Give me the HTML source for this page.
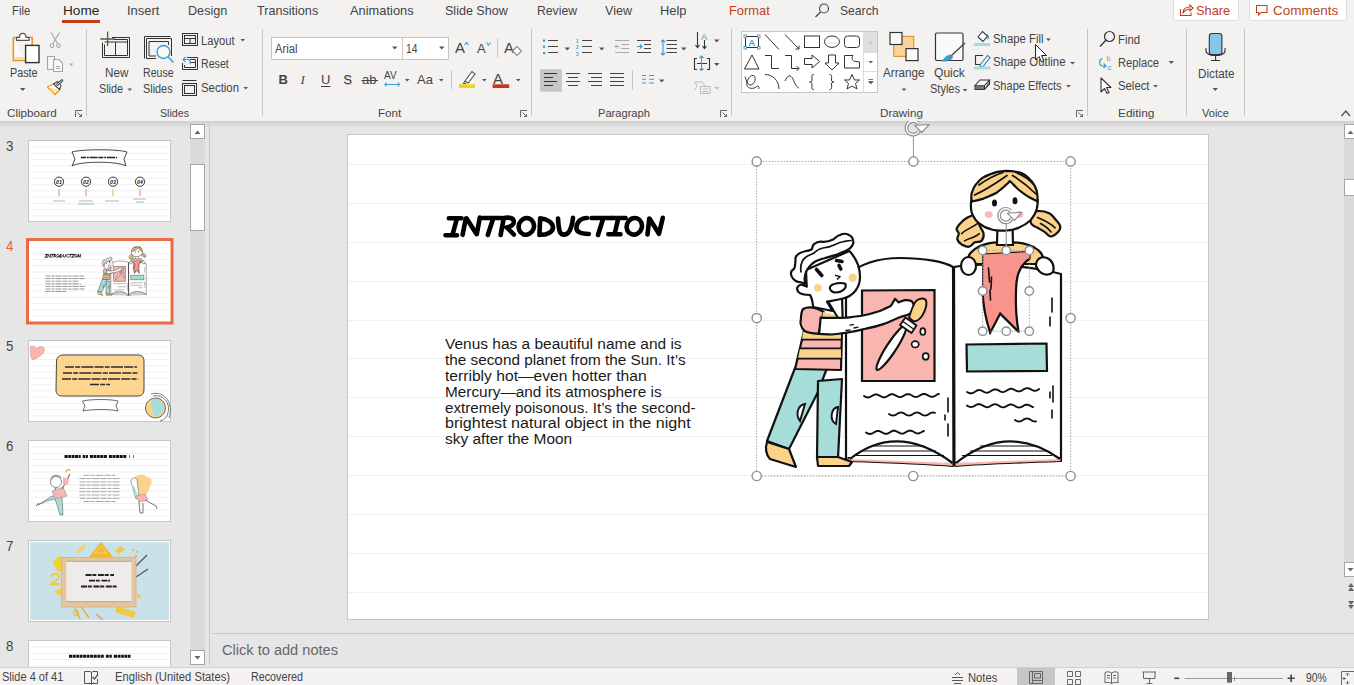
<!DOCTYPE html>
<html><head><meta charset="utf-8"><style>
html,body{margin:0;padding:0;width:1354px;height:685px;overflow:hidden;background:#e6e6e6;font-family:'Liberation Sans',sans-serif;}
.t{position:absolute;white-space:pre;transform-origin:0 0;font-family:'Liberation Sans',sans-serif;}
.b{position:absolute;box-sizing:border-box;}
.ov{position:absolute;left:0;top:0;}

</style></head><body>
<div class=b style="left:0;top:0;width:1354px;height:121px;background:#f3f2f1"></div>
<div class=b style="left:0;top:121px;width:1354px;height:7px;background:linear-gradient(#cfcfcf,#e6e6e6)"></div>
<div class=b style="left:62px;top:20px;width:38px;height:3px;background:#c43e1c"></div>
<div class=b style="left:1173px;top:-2px;width:66px;height:23px;background:#fff;border:1px solid #e1dfdd;border-radius:3px"></div>
<div class=b style="left:1249px;top:-2px;width:98px;height:23px;background:#fff;border:1px solid #e1dfdd;border-radius:3px"></div>
<!-- left panel -->
<div class=b style="left:190px;top:124px;width:15px;height:541px;background:#dadada"></div>
<div class=b style="left:190px;top:124px;width:15px;height:15px;background:#fff;border:1px solid #a6a6a6"></div>
<div class=b style="left:190px;top:164px;width:15px;height:67px;background:#fff;border:1px solid #a6a6a6"></div>
<div class=b style="left:190px;top:650px;width:15px;height:15px;background:#fff;border:1px solid #a6a6a6"></div>
<div class=b style="left:209px;top:124px;width:1px;height:541px;background:#c8c8c8"></div>
<!-- right scrollbar -->
<div class=b style="left:1344px;top:124px;width:10px;height:439px;background:#dadada"></div>
<div class=b style="left:1344px;top:124px;width:12px;height:15px;background:#fff;border:1px solid #a6a6a6"></div>
<div class=b style="left:1344px;top:179px;width:12px;height:17px;background:#fff;border:1px solid #a6a6a6"></div>
<div class=b style="left:1344px;top:562px;width:12px;height:15px;background:#fff;border:1px solid #a6a6a6"></div>
<!-- slide -->
<div class=b style="left:347px;top:134px;width:862px;height:486px;background:#fff;border:1px solid #c6c6c6"></div>
<!-- notes -->
<div class=b style="left:212px;top:633px;width:1142px;height:1px;background:#c8c8c8"></div>
<!-- status bar -->
<div class=b style="left:0;top:667px;width:1354px;height:18px;background:#f3f2f1;border-top:1px solid #d2d2d2"></div>
<div class=b style="left:1017px;top:668px;width:38px;height:17px;background:#c8c6c4"></div>

<svg class=ov width="1354" height="685" viewBox="0 0 1354 685">
<g stroke="#f0f0f0" stroke-width="1">
<path d="M348 164.5H1208M348 203.5H1208M348 242.5H1208M348 281.5H1208M348 320.5H1208M348 358.5H1208M348 397.5H1208M348 436.5H1208M348 475.5H1208M348 514.5H1208M348 553.5H1208M348 592.5H1208"/>
</g>
<g id="ttl" fill="none" stroke="#000" stroke-width="4.6" stroke-linecap="round" stroke-linejoin="round">
<path d="M448.8,218.3H461.5 M456.8,218.8L452.6,234.5 M445.5,235.2H457"/>
<path d="M465.8,218.5L462.6,234.8 M466.6,218.5L476.5,234 M479.8,217.6L476.8,234"/>
<path d="M481.8,218H501.5 M493.2,218.5L487.8,235"/>
<path d="M503.8,218L500.6,235 M503.8,218C509,217 513.5,218 513.8,221.5C514,225 510,227 506.5,227.5 M507,227.5L513.8,234.5"/>
<ellipse cx="526.3" cy="226.4" rx="7.6" ry="8.4" transform="rotate(20 526.3 226.4)"/>
<path d="M540.2,218.5L539.4,235 M540.2,218.3C548,219 553,223 553,227.5C553,232 547,235 539.6,234.8"/>
<path d="M558,218.5C558.5,224 558.5,230 560.5,233 C562.5,235.5 566,235 568.5,232.5 C571,229 572.5,223 573,217.8"/>
<path d="M587,218C582,217.5 577.5,221 576.5,226.5 C575.8,231 579,234 588.8,234"/>
<path d="M591.5,218H611.5 M603.2,218.5L598,235"/>
<path d="M611,218H625.5 M618.2,218.5L614.7,233.8 M608.3,234.2H620.5"/>
<ellipse cx="634.3" cy="226.3" rx="7.6" ry="8.4" transform="rotate(20 634.3 226.3)"/>
<path d="M649.3,218.5L647.5,234.5 M649.6,218.8L659,233.8 M662.8,217.8L659,233.8"/>
</g>
<g font-family="Liberation Sans, sans-serif">
<rect x="271.5" y="37.5" width="131" height="22" fill="#fff" stroke="#c8c6c4"/>
<rect x="402.5" y="37.5" width="46" height="22" fill="#fff" stroke="#c8c6c4"/>
<!-- separators -->
<path d="M86.5,29V116 M262.5,29V116 M531.5,29V116 M731.5,29V116 M1087.5,29V116 M1186.5,29V116 M1244.5,29V116" stroke="#c8c6c4" stroke-width="1"/>
<!-- dialog launchers -->
<g fill="none" stroke="#666" stroke-width="1">
<path d="M75.5,117V110.5H82 M77.5,112.5L81.5,116.5 M81.5,114V116.5H79"/>
<path d="M520.5,117V110.5H527 M522.5,112.5L526.5,116.5 M526.5,114V116.5H524"/>
<path d="M720.5,117V110.5H727 M722.5,112.5L726.5,116.5 M726.5,114V116.5H724"/>
<path d="M1076.5,117V110.5H1083 M1078.5,112.5L1082.5,116.5 M1082.5,114V116.5H1080"/>
</g>
<!-- dropdown arrows -->
<g fill="#555">
<path d="M20,88H25.5L22.75,91Z"/>
<path d="M69,63.5H73.5L71.25,66Z" fill="#aaa"/>
<path d="M127.5,88.5H132L129.75,91Z"/>
<path d="M240.5,39H245L242.75,41.5Z"/>
<path d="M243.5,87H248L245.75,89.5Z"/>
<path d="M392,46.5H397.5L394.75,49.5Z"/>
<path d="M439,46.5H444.5L441.75,49.5Z"/>
<path d="M405,79H409.5L407.25,81.5Z"/>
<path d="M439,79H443.5L441.25,81.5Z"/>
<path d="M482,79H486.5L484.25,81.5Z"/>
<path d="M516,79H520.5L518.25,81.5Z"/>
<path d="M564.5,47.5H570L567.25,50.5Z"/>
<path d="M599,47.5H604.5L601.75,50.5Z"/>
<path d="M681,47.5H686.5L683.75,50.5Z"/>
<path d="M714,39.5H719.5L716.75,42.5Z"/>
<path d="M714,63H719.5L716.75,66Z"/>
<path d="M714,87H719.5L716.75,89.5Z" fill="#bbb"/>
<path d="M659,79.5H664.5L661.75,82.5Z"/>
<path d="M901.5,88.5H906.5L904,91Z"/>
<path d="M962.5,89H967.5L965,91.5Z"/>
<path d="M1046,38.5H1051L1048.5,41Z"/>
<path d="M1070,62H1075L1072.5,64.5Z"/>
<path d="M1066,85H1071L1068.5,87.5Z"/>
<path d="M1168.5,61H1174L1171.25,64Z"/>
<path d="M1153,85H1158L1155.5,87.5Z"/>
<path d="M1212.5,88H1218L1215.25,91Z"/>
</g>
<!-- Paste icon -->
<path d="M13.3,37.5H32.2V45 M13.3,37.5V60.5H25" fill="#fbfaf9" stroke="#e8932e" stroke-width="1.6"/>
<path d="M14.5,57H25V59.8H14.5Z" fill="#fcd9a5"/>
<path d="M16.5,40.3V37.3H19.5C19.5,34.5 21,33.3 22.7,33.3C24.4,33.3 26,34.5 26,37.3H29V40.3Z" fill="#fff" stroke="#555" stroke-width="1.2"/>
<rect x="25.6" y="45.4" width="13.4" height="17.2" fill="#fff" stroke="#333" stroke-width="1.4"/>
<!-- scissors -->
<g stroke="#a5a5a5" stroke-width="1.1" fill="none">
<path d="M51,32.5L57.5,43.5 M59.5,32.5L53,43.5"/>
<circle cx="52" cy="45.6" r="1.8"/><circle cx="58.5" cy="45.6" r="1.8"/>
</g>
<!-- copy -->
<g stroke="#a5a5a5" stroke-width="1.1" fill="#f7f7f7">
<path d="M47.5,56.5H54.5V69.5H47.5Z"/>
<path d="M53.5,59.5H59L62.5,63V71.5H53.5Z"/>
<path d="M56,66.5H60 M56,68.5H60" fill="none"/>
</g>
<!-- format painter -->
<path d="M47.5,87L54,83.5L60,89.5L54.8,94.5Z" fill="#fff" stroke="#e8932e" stroke-width="1.3" stroke-linejoin="round"/>
<path d="M49.5,89.5L53.5,91.5L54.5,93.5Z M50,88.5L57,90.5" fill="#f5c85b" stroke="#f5c85b" stroke-width="1.2"/>
<path d="M53.5,84L57.5,81.5L61,85.5L59.5,89.5Z" fill="#fff" stroke="#444" stroke-width="1.1" stroke-linejoin="round"/>
<path d="M57.5,84.5L62,80.5" stroke="#444" stroke-width="2.6" stroke-linecap="round"/>
<path d="M57.5,84.5L62,80.5" stroke="#f3f2f1" stroke-width="0.8" stroke-linecap="round"/>
<!-- New slide -->
<g fill="none" stroke="#333" stroke-width="1">
<path d="M102.5,42.5V57.5H129.5V37.5H112"/>
<path d="M104.5,44.5V55.5H127.5V39.5H114"/>
<path d="M115.5,42V55.5 M104.5,42H127.5"/>
</g>
<path d="M100.3,39H115 M107.6,31.6V46" stroke="#41614c" stroke-width="1.3"/>
<!-- Reuse slides -->
<g fill="none" stroke="#333" stroke-width="1">
<path d="M144.5,36.5H170.5 M144.5,36.5V58.5 M146.5,38.5H171.5V56 M146.5,38.5V58.5H156"/>
<path d="M149,41.5H168.5V45 M149,41.5V56H156"/>
</g>
<circle cx="163.5" cy="52" r="6.5" fill="#fafafa" stroke="#3d9bd1" stroke-width="1.4"/>
<path d="M168,56.8L173.5,62.5" stroke="#3d9bd1" stroke-width="1.5"/>
<!-- Layout icon -->
<g fill="none" stroke="#333" stroke-width="1">
<rect x="182.5" y="33.5" width="15" height="12"/>
<rect x="184.5" y="35.5" width="11" height="8"/>
<path d="M184.5,38.5H195.5 M190,38.5V43.5"/>
</g>
<!-- Reset icon -->
<g fill="none" stroke="#333" stroke-width="1">
<path d="M187,57.5H197.5V69.5H182.5V63"/>
<path d="M190,59.5H195.5V67.5H184.5V65"/>
<path d="M190,62.5H195.5"/>
</g>
<path d="M183,59.5L185.5,57 M183,59.5L185.5,62 M183.5,59.5H188C190,59.5 190.5,62 190,64" fill="none" stroke="#3d9bd1" stroke-width="1.2"/>
<!-- Section icon -->
<g fill="none" stroke="#333" stroke-width="1">
<path d="M182.5,80.5H196.5"/>
<rect x="182.5" y="83.5" width="14" height="12"/>
<rect x="184.5" y="85.5" width="10" height="8"/>
</g>
<!-- Font boxes -->
<text x="455" y="53" font-size="15" fill="#444">A</text>
<path d="M464.5,45L466.5,42.5L468.5,45" fill="none" stroke="#3d9bd1" stroke-width="1.1"/>
<text x="477" y="53" font-size="13" fill="#444">A</text>
<path d="M486.5,42.5L488.5,45L490.5,42.5" fill="none" stroke="#3d9bd1" stroke-width="1.1"/>
<path d="M497.5,38.5V58" stroke="#c8c6c4"/>
<text x="504" y="53" font-size="15" fill="#444">A</text>
<path d="M512.5,51L517,46.5L521.5,51L517,55.5Z" fill="#fff" stroke="#888" stroke-width="1.1"/>
<!-- B I U S ab AV Aa -->
<text x="278.6" y="84.2" font-size="13" font-weight="bold" fill="#444">B</text>
<text x="300.5" y="84.2" font-size="13" font-style="italic" font-family="Liberation Serif, serif" fill="#444">I</text>
<text x="321" y="84.2" font-size="13" fill="#444">U</text>
<path d="M321,86.5H330.5" stroke="#444" stroke-width="1"/>
<text x="344" y="85" font-size="13" fill="#bbb">S</text>
<text x="343.3" y="84.2" font-size="13" fill="#444">S</text>
<text x="362" y="84.2" font-size="13" fill="#444">ab</text>
<path d="M361.5,80.5H378" stroke="#444" stroke-width="1"/>
<text x="384" y="79" font-size="10" fill="#444">AV</text>
<path d="M384.5,84.5H400 M384.5,84.5L387,82.5 M384.5,84.5L387,86.5 M400,84.5L397.5,82.5 M400,84.5L397.5,86.5" fill="none" stroke="#3d9bd1" stroke-width="1"/>
<text x="417" y="84.2" font-size="13" fill="#444">Aa</text>
<path d="M451.5,70V89" stroke="#c8c6c4"/>
<path d="M465,81L472,71.5L475,74L468,83Z M465,81L463.5,83.5L466,83.5" fill="#fff" stroke="#555" stroke-width="1.1"/>
<rect x="459" y="84.3" width="16" height="3.7" fill="#f2d317"/>
<text x="493" y="84" font-size="15" fill="#444">A</text>
<rect x="492.6" y="84.3" width="16.6" height="3.7" fill="#c8361d"/>
<!-- Paragraph icons -->
<g fill="#3d9bd1"><rect x="543" y="39.5" width="2.2" height="2.2"/><rect x="543" y="45.6" width="2.2" height="2.2"/><rect x="543" y="52" width="2.2" height="2.2"/></g>
<path d="M548,40.5H558 M548,46.5H558 M548,52.5H558" stroke="#444" stroke-width="1.1"/>
<text x="576" y="42.5" font-size="4.5" fill="#3d9bd1" font-weight="bold">1</text>
<text x="576" y="49" font-size="4.5" fill="#3d9bd1" font-weight="bold">2</text>
<text x="576" y="55.5" font-size="4.5" fill="#3d9bd1" font-weight="bold">3</text>
<path d="M582,40.5H592 M582,46.5H592 M582,52.5H592" stroke="#444" stroke-width="1.1"/>
<path d="M615,40.5H629 M621,44.5H629 M621,48.5H629 M615,52.5H629" stroke="#aaa" stroke-width="1.1"/>
<path d="M619.5,46.5H615 M617,44.5L615,46.5L617,48.5" fill="none" stroke="#aaa" stroke-width="1"/>
<path d="M637,40.5H651 M644,44.5H651 M644,48.5H651 M637,52.5H651" stroke="#444" stroke-width="1.1"/>
<path d="M637,46.5H642 M640,44.5L642,46.5L640,48.5" fill="none" stroke="#3d9bd1" stroke-width="1.1"/>
<path d="M666.5,40.5H677 M666.5,44.5H677 M666.5,48.5H677 M666.5,52.5H677" stroke="#444" stroke-width="1.1"/>
<path d="M663,40V55 M661,42L663,40L665,42 M661,53L663,55L665,53" fill="none" stroke="#3d9bd1" stroke-width="1.1"/>
<path d="M697.5,32V47 M695.5,45L697.5,47.5L699.5,45 M704.5,40V48 M702.5,46L704.5,48.5L706.5,46" fill="none" stroke="#333" stroke-width="1.1"/>
<text x="701" y="39.5" font-size="9" fill="#3d9bd1">A</text>
<path d="M697,58.5H694.5V69.5H697 M707,58.5H709.5V69.5H707 M697,63.5H707" fill="none" stroke="#333" stroke-width="1.1"/>
<path d="M701.5,56V70.5 M699.5,58L701.5,56L703.5,58 M699.5,68.5L701.5,70.5L703.5,68.5" fill="none" stroke="#3d9bd1" stroke-width="1.1"/>
<path d="M694.5,82H702L705,86 M694.5,82L697.5,86L694.5,90" fill="none" stroke="#bbb" stroke-width="1"/>
<rect x="700.5" y="86.5" width="9.5" height="7" fill="#f3f2f1" stroke="#bbb"/>
<path d="M702.5,89H708 M702.5,91.5H708" stroke="#bbb"/>
<rect x="540" y="69.2" width="21.8" height="22.5" fill="#c8c6c4"/>
<path d="M544,73.5H557 M544,77.5H553 M544,81.5H557 M544,85.5H553" stroke="#333" stroke-width="1.1"/>
<path d="M566,73.5H580 M568,77.5H578 M566,81.5H580 M568,85.5H578" stroke="#444" stroke-width="1.1"/>
<path d="M588,73.5H602 M591,77.5H602 M588,81.5H602 M591,85.5H602" stroke="#444" stroke-width="1.1"/>
<path d="M610,73.5H624 M610,77.5H624 M610,81.5H624 M610,85.5H624" stroke="#444" stroke-width="1.1"/>
<path d="M632.5,70V90" stroke="#c8c6c4"/>
<path d="M642,75.5H646 M642,79.3H646 M642,83H646 M649,75.5H654 M649,79.3H654 M649,83H654" stroke="#3d9bd1" stroke-width="1.1"/>
<!-- shapes gallery -->
<rect x="741.5" y="31.5" width="136" height="61" fill="#fff" stroke="#c8c6c4"/>
<rect x="864" y="32" width="13" height="20.5" fill="#e1dfdd"/>
<path d="M863.5,32V92 M864,52.5H877 M864,71.5H877" stroke="#dedede"/>
<path d="M868.5,43.5H873L870.75,41Z" fill="#c0c0c0"/>
<path d="M868.5,61H873L870.75,63.5Z" fill="#555"/>
<path d="M868.5,79.5H873 M868.5,81.5H873L870.75,84Z" stroke="#555" stroke-width="0.8" fill="#555"/>
<g fill="none" stroke="#333" stroke-width="1">
<rect x="745.5" y="36.5" width="13" height="11"/>
<path d="M765,34.5L779,49.5 M785,34.5L799,49 M799,49V45.5 M799,49H795.5"/>
<rect x="804.5" y="36" width="15" height="11.5"/>
<ellipse cx="832" cy="41.7" rx="7.5" ry="5.7"/>
<rect x="844.5" y="36" width="15" height="11.5" rx="3"/>
<path d="M744.5,69L752,55L759,69Z"/>
<path d="M765,55.5H771.5V68.5H779"/>
<path d="M785,55.5H791.5V68.5H799 M796.5,66L799,68.5L796.5,71"/>
<path d="M804.5,58.5H812V55L819.5,61.5L812,68V64.5H804.5Z"/>
<path d="M828.5,55H835.5V63H839L832,70L825,63H828.5Z"/>
<path d="M844.5,55.5H853C851,58 852,61 856,61.5 L859.5,62V68H844.5Z"/>
<path d="M745,76.5C746,80 748,86 751,85C755,84 757,76 753,75.5C749,75 746,82 747,85.5C748,89 754,89 756,87C758,85 760,87 758.5,89"/>
<path d="M765,74.5C772,74.5 779,80 779,89"/>
<path d="M785,81C788,75 790,74 793,79C795,84 797,88 799,88"/>
<path d="M814,74.5C811,74.5 812,77 812,80C812,81.5 811,82 809.5,82C811,82 812,82.5 812,84C812,87 811,89.5 814,89.5"/>
<path d="M829.5,74.5C832.5,74.5 831.5,77 831.5,80C831.5,81.5 832.5,82 834,82C832.5,82 831.5,82.5 831.5,84C831.5,87 832.5,89.5 829.5,89.5"/>
<path d="M852,74.5L854.5,80H859.5L855.5,83.5L857,89L852,86L847,89L848.5,83.5L844.5,80H849.5Z"/>
</g>
<g fill="#fff" stroke="#3d9bd1" stroke-width="0.9"><rect x="744" y="35" width="2.5" height="2.5"/><rect x="757.5" y="35" width="2.5" height="2.5"/><rect x="744" y="46.5" width="2.5" height="2.5"/><rect x="757.5" y="46.5" width="2.5" height="2.5"/></g>
<text x="748.5" y="45.5" font-size="9" font-weight="bold" fill="#3d9bd1">A</text>
<!-- Arrange -->
<rect x="893.7" y="36.4" width="20" height="20" fill="#fbd39a" stroke="#e8932e" stroke-width="1.2"/>
<rect x="890" y="32.5" width="12" height="12" fill="#fafafa" stroke="#333" stroke-width="1.2"/>
<rect x="906" y="48.6" width="12" height="12" fill="#fafafa" stroke="#333" stroke-width="1.2"/>
<!-- Quick styles -->
<rect x="935.5" y="33" width="27.5" height="27.5" rx="1.5" fill="#fafafa" stroke="#333" stroke-width="1.2"/>
<path d="M965,43L951,56" stroke="#444" stroke-width="1.4"/>
<path d="M951,55C947,55 945,58 942,61C947,61.5 952,60 952.5,57Z" fill="#3d9bd1" stroke="#2f86ba" stroke-width="0.8"/>
<!-- Shape fill -->
<path d="M978,37L982.5,31.5L987.5,36L983,41.5Z" fill="#fff" stroke="#333" stroke-width="1.1"/>
<path d="M986.5,34.5C988,35 988.5,37 988,39" fill="none" stroke="#2f86ba" stroke-width="1.3"/>
<rect x="974" y="43" width="16.4" height="3" fill="#a6ddd8"/>
<!-- shape outline -->
<path d="M983,55.5H975.5V64.5H980" fill="none" stroke="#333" stroke-width="1.1"/>
<path d="M980.5,64.5L987.5,55.5L990,57.5L983,66.5L980,67Z" fill="#fff" stroke="#2f86ba" stroke-width="1.2"/>
<rect x="974" y="66.5" width="16.4" height="3" fill="#a6ddd8"/>
<!-- shape effects -->
<path d="M975,85.5L980,80H989.5L984.5,85.5Z" fill="#f7f7f7" stroke="#333" stroke-width="1.1"/>
<path d="M975,85.5V89.5H984.5V85.5 M984.5,89.5L989.5,84V80" fill="#777" stroke="#333" stroke-width="1.1"/>
<path d="M975.5,86H984V89H975.5Z" fill="#777"/>
<!-- cursor -->
<path d="M1035.5,44.5V60L1039,56.5L1041.5,62L1044,61L1041.5,55.5H1046.5Z" fill="#fff" stroke="#222" stroke-width="1"/>
<!-- Find -->
<circle cx="1109.5" cy="36.5" r="5" fill="none" stroke="#333" stroke-width="1.2"/>
<path d="M1106,40L1100,46.5" stroke="#333" stroke-width="1.3"/>
<!-- Replace -->
<text x="1106.5" y="61" font-size="7" fill="#999">b</text>
<text x="1107.5" y="69.5" font-size="8" fill="#3d9bd1">c</text>
<path d="M1102.5,58.5C1098.5,59.5 1098.5,65.5 1103,66 L1105.5,66 M1103.5,63.5L1106,66L1103.5,68" fill="none" stroke="#3d9bd1" stroke-width="1.2"/>
<!-- Select -->
<path d="M1101,78V92L1104.5,88.5L1107,93.5L1109,92.5L1106.5,87.5H1111Z" fill="#fff" stroke="#333" stroke-width="1.1" stroke-linejoin="round"/>
<!-- Dictate -->
<rect x="1209.3" y="33.5" width="12.6" height="21" rx="2.5" fill="#8ac4e6" stroke="#333" stroke-width="1.1"/>
<path d="M1206,48V51C1206,57 1225,57 1225,51V48 M1215.6,55.5V60.5 M1211,60.5H1220" fill="none" stroke="#333" stroke-width="1.1"/>
<!-- collapse caret -->
<path d="M1341.5,116L1345.75,111L1350,116" fill="none" stroke="#555" stroke-width="1.4"/>
<!-- tabs search icon -->
<circle cx="824" cy="8.5" r="4.5" fill="none" stroke="#444" stroke-width="1.1"/>
<path d="M820.8,11.8L815.5,17" stroke="#444" stroke-width="1.2"/>
<!-- share icon -->
<path d="M1180.5,9V15.5H1191V12.5" fill="none" stroke="#c43e1c" stroke-width="1.1"/>
<path d="M1183,13C1183,9 1186,7 1190,7V5L1193,8L1190,11V9C1187,9 1185,10.5 1183,13Z" fill="none" stroke="#c43e1c" stroke-width="1.1"/>
<!-- comments icon -->
<path d="M1256.5,5.5H1267V12.5H1261L1258.5,15V12.5H1256.5Z" fill="none" stroke="#c43e1c" stroke-width="1.1"/>
</g>
<defs><clipPath id="pclip"><rect x="0" y="121" width="189" height="546"/></clipPath></defs>
<g clip-path="url(#pclip)">
<rect x="28.5" y="140.5" width="142" height="81" fill="#fff" stroke="#c6c6c6" stroke-width="1"/>
<path d="M31,147.1H168 M31,153.4H168 M31,159.6H168 M31,165.9H168 M31,172.1H168 M31,178.4H168 M31,184.7H168 M31,190.9H168 M31,197.2H168 M31,203.4H168 M31,209.7H168 M31,216.0H168 " stroke="#f0f0f0" stroke-width="1"/>
<rect x="27.5" y="239.5" width="144.5" height="83.5" fill="#fff" stroke="#ea6a45" stroke-width="3"/>
<path d="M31,247.1H168 M31,253.4H168 M31,259.6H168 M31,265.9H168 M31,272.1H168 M31,278.4H168 M31,284.7H168 M31,290.9H168 M31,297.2H168 M31,303.4H168 M31,309.7H168 M31,316.0H168 " stroke="#f0f0f0" stroke-width="1"/>
<rect x="28.5" y="340.5" width="142" height="81" fill="#fff" stroke="#c6c6c6" stroke-width="1"/>
<path d="M31,347.1H168 M31,353.4H168 M31,359.6H168 M31,365.9H168 M31,372.1H168 M31,378.4H168 M31,384.7H168 M31,390.9H168 M31,397.2H168 M31,403.4H168 M31,409.7H168 M31,416.0H168 " stroke="#f0f0f0" stroke-width="1"/>
<rect x="28.5" y="440.5" width="142" height="81" fill="#fff" stroke="#c6c6c6" stroke-width="1"/>
<path d="M31,447.1H168 M31,453.4H168 M31,459.6H168 M31,465.9H168 M31,472.1H168 M31,478.4H168 M31,484.7H168 M31,490.9H168 M31,497.2H168 M31,503.4H168 M31,509.7H168 M31,516.0H168 " stroke="#f0f0f0" stroke-width="1"/>
<rect x="28.5" y="540.5" width="142" height="81" fill="#fff" stroke="#c6c6c6" stroke-width="1"/>
<rect x="28.5" y="640.5" width="142" height="81" fill="#fff" stroke="#c6c6c6" stroke-width="1"/>
<path d="M31,647.1H168 M31,653.4H168 M31,659.6H168 M31,665.9H168 M31,672.1H168 M31,678.4H168 M31,684.7H168 M31,690.9H168 M31,697.2H168 M31,703.4H168 M31,709.7H168 M31,716.0H168 " stroke="#f0f0f0" stroke-width="1"/>
<path d="M72,166 C80,161 118,161 126,166 L124,159 L127,152 C118,149 82,149 72,152 L75,159 Z" fill="#fff" stroke="#333" stroke-width="0.9"/>
<path d="M81,157.5H117" stroke="#222" stroke-width="1.7" stroke-dasharray="5,0.8,2,0.8,8,0.8"/>
<circle cx="59" cy="181.7" r="4.6" fill="#fff" stroke="#222" stroke-width="0.9"/>
<text x="59" y="183.6" font-size="5.2" font-weight="bold" font-style="italic" text-anchor="middle" fill="#111" font-family="Liberation Sans">01</text>
<rect x="58.2" y="189" width="1.8" height="7" fill="#a6ddd8"/>
<circle cx="86" cy="181.7" r="4.6" fill="#fff" stroke="#222" stroke-width="0.9"/>
<text x="86" y="183.6" font-size="5.2" font-weight="bold" font-style="italic" text-anchor="middle" fill="#111" font-family="Liberation Sans">02</text>
<rect x="85.2" y="189" width="1.8" height="7" fill="#f9b5b0"/>
<circle cx="113" cy="181.7" r="4.6" fill="#fff" stroke="#222" stroke-width="0.9"/>
<text x="113" y="183.6" font-size="5.2" font-weight="bold" font-style="italic" text-anchor="middle" fill="#111" font-family="Liberation Sans">03</text>
<rect x="112.2" y="189" width="1.8" height="7" fill="#fbd28a"/>
<circle cx="140" cy="181.7" r="4.6" fill="#fff" stroke="#222" stroke-width="0.9"/>
<text x="140" y="183.6" font-size="5.2" font-weight="bold" font-style="italic" text-anchor="middle" fill="#111" font-family="Liberation Sans">04</text>
<rect x="139.2" y="189" width="1.8" height="7" fill="#f9b5b0"/>
<path d="M53,201H65 M79,201H93 M78,204H94 M105,201H119 M133,199H146 M136,202H144" stroke="#aaa" stroke-width="0.9"/>
<g transform="translate(28.8,240.8) scale(0.1647) translate(-348,-135)"><use href="#illus"/><use href="#ttl"/></g>
<path d="M45.5,276H84 M45.5,278.6H85 M45.5,281.2H79 M45.5,283.8H81 M45.5,286.4H86 M45.5,289H85.5 M45.5,291.5H66" stroke="#888" stroke-width="0.9" stroke-dasharray="5,1,3,1,6,1"/>
<path d="M56.5,362C56.5,357 59,355 64,355H138C143,355 144,358 144,362V389C144,394 142,396 137,396H63C58,396 56,394 56,390Z" fill="#fdd58e" stroke="#333" stroke-width="0.9"/>
<path d="M65,367H137 M63,373H138 M62,379H138 M90,384.5H110" stroke="#2a2a2a" stroke-width="1.6" stroke-dasharray="9,1.2,5,1.2,12,1.2"/>
<path d="M30.5,346.5C33,345 36,347 37,349C38,346 42,346 44,348C46,352 40,357 33,360C30.5,358 30,354 30.5,346.5Z" fill="#f9b5b0" stroke="#c88" stroke-width="0.5"/>
<path d="M82.5,401C92,399 110,399 118,401L116,406L118,411C110,409 92,409 83,411L85,406Z" fill="#fff" stroke="#444" stroke-width="0.8"/>
<circle cx="155.5" cy="408" r="10" fill="#fbd28a" stroke="#444" stroke-width="0.8"/>
<path d="M152,399C158,398 164,402 164,408C163,413 159,416 155,417C152,412 150,405 152,399Z" fill="#a6ddd8"/>
<path d="M153,396C164,394 172,404 167,416C165,419 163,420 160,421 M151,394C165,390 174,404 169,418" fill="none" stroke="#555" stroke-width="0.8"/>
<path d="M64.5,456.5H134" stroke="#111" stroke-width="2.8" stroke-dasharray="3.2,0.6,3,0.6,2.6,0.6,3,0.6,2,2,2.6,0.6,2,2,3,0.6,3,0.6,2.6,0.6,3,0.6,3,2,3,0.6,3,0.6,3,0.6,3,0.6,3"/>
<path d="M83.5,475.3H115.5 M79.5,478.6H119.5 M79.5,481.9H119.5 M79.5,485.1H119.5 M79.5,488.4H119.5 M79.5,491.7H119.5 M79.5,495.0H119.5 M79.5,498.3H119.5 M83.5,501.5H115.5 " stroke="#9a9a9a" stroke-width="0.9" stroke-dasharray="6,1,4,1,8,1"/>
<path d="M38,505L47,501L55,499L57,505L60,515L63,515L62,497L52,496Z" fill="#a6ddd8" stroke="#666" stroke-width="0.6"/>
<path d="M52,491L63,487L67,496L55,499Z" fill="#f9b5b0" stroke="#888" stroke-width="0.5"/>
<path d="M62,489L67,480L70,474 M55,490L60,479" fill="none" stroke="#777" stroke-width="1.2"/>
<circle cx="56" cy="482" r="5.5" fill="#fff" stroke="#777" stroke-width="0.8"/>
<path d="M51,480C52,475 58,474 61,478" fill="none" stroke="#999" stroke-width="1.6"/>
<path d="M66,472C66,469 70,469 70,471" fill="none" stroke="#f0a93a" stroke-width="1.2"/>
<path d="M63,477L69,479L68,485L63,484Z" fill="#f9b5b0"/>
<path d="M36,506L39,503" stroke="#666" stroke-width="1"/>
<path d="M134,478C137,474 143,473 147,477C152,478 153,482 150,486C149,492 146,496 141,498C137,494 134,486 134,478Z" fill="#fbd28a"/>
<path d="M131,482C131,478 135,477 137,479L139,497L136,499Z" fill="#fff" stroke="#777" stroke-width="0.7"/>
<path d="M133,486L137,496" stroke="#a6ddd8" stroke-width="2"/>
<path d="M136,496L145,494L148,500L139,502Z" fill="#f9b5b0" stroke="#888" stroke-width="0.5"/>
<path d="M139,502L140,513L143,513L143,503 M145,500L156,506L157,509" fill="none" stroke="#777" stroke-width="1"/>
<rect x="30" y="542" width="139" height="78" fill="#c9e1e9"/>
<path d="M89,557L101,542L113,557Z" fill="#f2b632"/>
<path d="M95,553L101,546L107,553Z" fill="none" stroke="#f7d57c" stroke-width="0.8"/>
<path d="M76,552L84,544L86,546L78,554Z" fill="#f5d25a"/>
<path d="M115,551L121,546L125,549L119,554Z" fill="#f2c744"/>
<path d="M52.5,562L60,555L64,572L57,571Z" fill="#f2d23a"/>
<path d="M51,577C52,573 59,573 59,577C59,580 53,582 51,584H60" fill="none" stroke="#f2c744" stroke-width="2"/>
<path d="M54,592L62,587L63,597Z" fill="#f2d23a"/>
<path d="M74,606L80,619 M80,605L89,618" stroke="#e8b52f" stroke-width="1.5" fill="none"/>
<circle cx="76" cy="613" r="2.5" fill="none" stroke="#e8b52f" stroke-width="1"/>
<path d="M117,606L136,612L134,618L115,612Z" fill="#f2c744"/>
<path d="M136,566L147,555 M136,577L148,569" stroke="#555" stroke-width="1.3"/>
<circle cx="133" cy="550" r="1" fill="#f0a93a"/><circle cx="137" cy="552" r="1" fill="#f0a93a"/><circle cx="136" cy="556" r="1" fill="#f0a93a"/>
<path d="M135,592L141,596L139,599Z" fill="#f2c744"/>
<path d="M96,614L103,620" stroke="#caa07a" stroke-width="1.4"/>
<rect x="61.5" y="557.5" width="74.5" height="49.5" fill="#e8c49c" stroke="#d4a982" stroke-width="0.7"/>
<rect x="66.3" y="560.7" width="65.2" height="41.6" fill="#eeebea"/>
<path d="M66.3,561.2H131.5 M66.3,601.8H131.5" stroke="#888" stroke-width="0.8"/>
<path d="M85.5,575H114 M89,580.7H110 M81,586.5H117" stroke="#222" stroke-width="1.8" stroke-dasharray="6,0.8,4,1.6"/>
<path d="M69,656.2H130.5" stroke="#111" stroke-width="3" stroke-dasharray="3.2,0.6,3,0.6,2.6,0.6,3,0.6,3,0.6,2.8,0.6,3,0.6,3,0.6,2.8,0.6,3,2,3,0.6,2.4,2"/>
</g><g id="illus"><path d="M975.5,215.4 C973.8,214.9 970.0,216.2 967.5,217.5 C965.0,218.8 962.0,221.5 960.2,223.4 C958.4,225.3 956.8,227.5 956.6,229.2 C956.4,230.9 958.7,231.9 958.8,233.6 C958.9,235.3 956.8,237.6 957.3,239.4 C957.8,241.2 959.8,243.3 961.7,244.5 C963.7,245.7 966.8,247.1 969.0,246.7 C971.2,246.3 972.7,243.3 974.8,242.3 C976.9,241.3 979.9,242.4 981.4,240.9 C982.9,239.4 983.9,236.0 983.6,233.6 C983.4,231.2 980.9,228.5 979.9,226.3 C978.9,224.1 978.4,222.3 977.7,220.5 C977.0,218.7 977.2,215.9 975.5,215.4 Z" fill="#fbd28a" stroke="#111" stroke-width="2.2" stroke-linejoin="round"/>
<path d="M1031.7,213.2 C1033.0,211.1 1036.1,211.0 1039.0,211.0 C1041.9,211.0 1046.5,211.9 1049.2,213.2 C1051.9,214.5 1053.3,216.8 1055.1,219.0 C1056.9,221.2 1059.7,224.1 1060.2,226.3 C1060.7,228.5 1059.6,230.4 1058.0,232.1 C1056.4,233.8 1052.9,236.5 1050.7,236.5 C1048.5,236.5 1047.1,233.5 1044.9,232.1 C1042.7,230.7 1039.9,229.2 1037.6,227.8 C1035.3,226.4 1032.0,225.8 1031.0,223.4 C1030.0,221.0 1030.4,215.3 1031.7,213.2 Z" fill="#fbd28a" stroke="#111" stroke-width="2.2" stroke-linejoin="round"/>
<path d="M961.7,233.6 C966,229 972,228 977.7,223.4 M964.6,240.9 C969,238 975,238 979.2,233.6 M1037.6,217.5 C1043,220 1049,222 1055.1,227.8 M1040.5,223.5 C1045,226 1049,229 1051,232" fill="none" stroke="#111" stroke-width="1.6" stroke-linecap="round"/>
<path d="M966,264 C968,254 972,250 980,246 C986,243.5 992,242.5 998,242.3 L1014,242.3 C1024,243 1032,245 1038,250 C1042,253 1044,257 1045,264 Z" fill="#fbd28a" stroke="#111" stroke-width="2.2" stroke-linejoin="round"/>
<path d="M997.5,224 L997,245 L1013,245 L1012.5,224 Z" fill="#fff" stroke="#111" stroke-width="2.2"/>
<path d="M971.2,201 C970.5,207 970.8,210 971.9,213.2 C974,218 976,221 979.2,223.4 C983,226.5 987,228.5 990.9,229.2 C995,230.5 1000,230.8 1005.5,230.7 C1010,230.5 1015,229.5 1018.6,227.8 C1023,226 1027,223.5 1030.3,220.5 C1034,216 1036,212 1036.8,208.8 C1037.5,205 1037.8,203 1037.6,201.5 C1037,190 1020,176 1005,176 C990,176 972,188 971.2,201 Z" fill="#fff" stroke="#111" stroke-width="2.2" stroke-linejoin="round"/>
<path d="M971.9,201.5 C971,197 971,195 971.9,192.7 C973,189 975,185 977.7,182.5 C981,178 985,176 989.4,174.5 C995,172 1000,171 1005.5,170.8 C1011,170.8 1016,171.5 1021.5,173 C1026,175 1029,178 1031.7,181.1 C1034,184 1036,188 1036.8,191.3 C1037.5,195 1037.8,198 1037.6,201.5 C1033,199 1028,197 1024.4,194.2 C1020,191 1017,188.5 1015.7,186.9 C1013,184 1011,182 1009.8,181.1 C1008,183 1007.5,184 1006.9,184 C1003,188 999,191 996.7,192.7 C992,195 987,197 983.6,198.6 C979,200 975,201 971.9,201.5 Z" fill="#fbd28a" stroke="#111" stroke-width="2.2" stroke-linejoin="round"/>
<path d="M1007,175.5 C999,181 988,189 974.5,195 M1003,172.5 C995,175 986,180 979,185 M1000,171.5 C994,172.5 989,174.5 986,176.5 M1012.5,175.5 C1020,180 1029,187 1036,194 M1016,172.5 C1022,175 1029,179 1033,184 M1020,172.5 C1024,174 1027,176 1029,178" fill="none" stroke="#111" stroke-width="1.7" stroke-linecap="round"/>
<ellipse cx="994.5" cy="203" rx="2.5" ry="3.5" fill="#111"/><ellipse cx="1015" cy="200.8" rx="2.5" ry="3.5" fill="#111"/>
<ellipse cx="988.7" cy="214.6" rx="4" ry="3.4" fill="#f9b9b9"/><ellipse cx="1019.3" cy="214.6" rx="4" ry="3.4" fill="#f9b9b9"/>
<path d="M846,462 L846,276 C862,262 880,258 900,258 C925,258 945,262 953,267 L954,465 C930,458 880,455 846,462 Z" fill="#fff" stroke="#111" stroke-width="2.2" stroke-linejoin="round"/>
<path d="M954,267 C980,262 1030,266 1061,274 L1061,461 C1030,456 985,456 954,465 Z" fill="#fff" stroke="#111" stroke-width="2.2" stroke-linejoin="round"/>
<path d="M953.5,266 L954,466" stroke="#111" stroke-width="3"/>
<path d="M848,457.5 C880,458 930,460 953,462.5 L953,466.5 C930,464.5 880,462.5 848,461.5 Z" fill="#f9b5b0" stroke="#111" stroke-width="1.1"/>
<path d="M955,462.5 C980,460 1030,458 1061,457.5 L1061,461.5 C1030,462.5 980,464.5 955,466.5 Z" fill="#f9b5b0" stroke="#111" stroke-width="1.1"/>
<path d="M850,459 Q897,422 952.5,463" fill="#fff" stroke="#111" stroke-width="2.2"/>
<path d="M956,463 Q1008,422 1060,459" fill="#fff" stroke="#111" stroke-width="2.2"/>
<path d="M872,446 H924 M862,451 H936 M856,455.5 H944 M980,446 H1036 M970,451 H1046 M962,455.5 H1052" stroke="#111" stroke-width="1.1"/>
<path d="M862,290.5 L934.5,290 L934.5,381 L862,381 Z" fill="#f9b5b0" stroke="#111" stroke-width="2.2"/>
<path d="M966.5,344.5 L1046.5,343.5 L1047,371 L967,371.5 Z" fill="#a6ddd8" stroke="#111" stroke-width="2.2"/>
<path d="M864.0,396.0 L865.0,396.6 L866.0,397.0 L867.0,397.4 L868.0,397.5 L869.0,397.3 L870.0,397.0 L871.0,396.5 L872.0,395.9 L873.0,395.3 L874.0,394.8 L875.0,394.5 L876.0,394.4 L877.0,394.5 L878.0,394.8 L879.0,395.3 L880.0,395.8 L881.0,396.4 L882.0,396.9 L883.0,397.2 L884.0,397.3 L885.0,397.2 L886.0,396.8 L887.0,396.3 L888.0,395.8 L889.0,395.2 L890.0,394.7 L891.0,394.3 L892.0,394.2 L893.0,394.3 L894.0,394.6 L895.0,395.1 L896.0,395.7 L897.0,396.2 L898.0,396.7 L899.0,397.0 L900.0,397.1 L901.0,397.0 L902.0,396.7 L903.0,396.2 L904.0,395.6 L905.0,395.0 L906.0,394.5 L907.0,394.2 L908.0,394.1 L909.0,394.2 L910.0,394.5 L911.0,395.0 L912.0,395.5 L913.0,396.1 L914.0,396.6 L915.0,396.9 L916.0,397.0 L917.0,396.9 L918.0,396.5 L919.0,396.0 L920.0,395.4 L921.0,394.9 L922.0,394.4 L923.0,394.0 L924.0,393.9 L925.0,394.0 L926.0,394.3 L927.0,394.8 L928.0,395.4 L929.0,395.9 L930.0,396.4 L931.0,396.7 L932.0,396.8 L933.0,396.7 L934.0,396.4 L935.0,395.9 L936.0,395.3 L937.0,394.7 L938.0,394.2 L939.0,393.9" fill="none" stroke="#111" stroke-width="1.9" stroke-linecap="round"/>
<path d="M889.0,414.0 L890.0,414.6 L891.0,415.1 L892.0,415.4 L893.0,415.5 L894.0,415.4 L895.0,415.1 L896.0,414.6 L897.0,414.0 L898.0,413.4 L899.0,412.9 L900.0,412.6 L901.0,412.5 L902.0,412.6 L903.0,412.9 L904.0,413.4 L905.0,414.0 L906.0,414.6 L907.0,415.1 L908.0,415.4 L909.0,415.5 L910.0,415.4 L911.0,415.1 L912.0,414.6 L913.0,414.0 L914.0,413.4 L915.0,412.9 L916.0,412.6 L917.0,412.5 L918.0,412.6 L919.0,412.9 L920.0,413.4 L921.0,414.0 L922.0,414.6 L923.0,415.1 L924.0,415.4 L925.0,415.5 L926.0,415.4 L927.0,415.1 L928.0,414.6 L929.0,414.0 L930.0,413.4 L931.0,412.9 L932.0,412.6 L933.0,412.5 L934.0,412.6 L935.0,412.9" fill="none" stroke="#111" stroke-width="1.9" stroke-linecap="round"/>
<path d="M866.0,432.5 L867.0,433.1 L868.0,433.5 L869.0,433.9 L870.0,434.0 L871.0,433.8 L872.0,433.5 L873.0,433.0 L874.0,432.4 L875.0,431.8 L876.0,431.3 L877.0,431.0 L878.0,430.9 L879.0,431.0 L880.0,431.3 L881.0,431.8 L882.0,432.3 L883.0,432.9 L884.0,433.4 L885.0,433.7 L886.0,433.8 L887.0,433.7 L888.0,433.3 L889.0,432.8 L890.0,432.3 L891.0,431.7 L892.0,431.2 L893.0,430.8 L894.0,430.7 L895.0,430.8 L896.0,431.1 L897.0,431.6 L898.0,432.2 L899.0,432.7 L900.0,433.2 L901.0,433.5 L902.0,433.6 L903.0,433.5 L904.0,433.2 L905.0,432.7 L906.0,432.1 L907.0,431.5 L908.0,431.0 L909.0,430.7 L910.0,430.6 L911.0,430.7 L912.0,431.0 L913.0,431.5 L914.0,432.0 L915.0,432.6 L916.0,433.1 L917.0,433.4 L918.0,433.5 L919.0,433.4 L920.0,433.0 L921.0,432.5 L922.0,431.9 L923.0,431.4 L924.0,430.9" fill="none" stroke="#111" stroke-width="1.9" stroke-linecap="round"/>
<path d="M967.0,392.0 L968.0,392.5 L969.0,393.0 L970.0,393.3 L971.0,393.3 L972.0,393.2 L973.0,392.8 L974.0,392.3 L975.0,391.7 L976.0,391.1 L977.0,390.5 L978.0,390.2 L979.0,390.0 L980.0,390.1 L981.0,390.4 L982.0,390.8 L983.0,391.4 L984.0,391.9 L985.0,392.3 L986.0,392.6 L987.0,392.7 L988.0,392.5 L989.0,392.2 L990.0,391.7 L991.0,391.0 L992.0,390.4 L993.0,389.9 L994.0,389.5 L995.0,389.4 L996.0,389.5 L997.0,389.7 L998.0,390.2 L999.0,390.7 L1000.0,391.3 L1001.0,391.7 L1002.0,392.0 L1003.0,392.1 L1004.0,391.9 L1005.0,391.5 L1006.0,391.0 L1007.0,390.4 L1008.0,389.8 L1009.0,389.3 L1010.0,388.9 L1011.0,388.7 L1012.0,388.8 L1013.0,389.1 L1014.0,389.5 L1015.0,390.1 L1016.0,390.6 L1017.0,391.1 L1018.0,391.3 L1019.0,391.4 L1020.0,391.3 L1021.0,390.9 L1022.0,390.4 L1023.0,389.8 L1024.0,389.1 L1025.0,388.6 L1026.0,388.3 L1027.0,388.1 L1028.0,388.2 L1029.0,388.5 L1030.0,388.9 L1031.0,389.4 L1032.0,390.0 L1033.0,390.4 L1034.0,390.7 L1035.0,390.8 L1036.0,390.6 L1037.0,390.3 L1038.0,389.7 L1039.0,389.1" fill="none" stroke="#111" stroke-width="1.9" stroke-linecap="round"/>
<path d="M967.0,405.5 L968.0,406.1 L969.0,406.6 L970.0,406.9 L971.0,407.0 L972.0,406.9 L973.0,406.6 L974.0,406.1 L975.0,405.6 L976.0,405.0 L977.0,404.5 L978.0,404.2 L979.0,404.1 L980.0,404.2 L981.0,404.6 L982.0,405.1 L983.0,405.7 L984.0,406.2 L985.0,406.7 L986.0,407.1 L987.0,407.2 L988.0,407.1 L989.0,406.8 L990.0,406.3 L991.0,405.7 L992.0,405.2 L993.0,404.7 L994.0,404.4 L995.0,404.3 L996.0,404.4 L997.0,404.7 L998.0,405.2 L999.0,405.8 L1000.0,406.4 L1001.0,406.9 L1002.0,407.2 L1003.0,407.4 L1004.0,407.3 L1005.0,406.9 L1006.0,406.5 L1007.0,405.9 L1008.0,405.3 L1009.0,404.9 L1010.0,404.5 L1011.0,404.4 L1012.0,404.6 L1013.0,404.9 L1014.0,405.4 L1015.0,406.0 L1016.0,406.6 L1017.0,407.1 L1018.0,407.4 L1019.0,407.5 L1020.0,407.4 L1021.0,407.1 L1022.0,406.6 L1023.0,406.1 L1024.0,405.5 L1025.0,405.0 L1026.0,404.7 L1027.0,404.6 L1028.0,404.7 L1029.0,405.1 L1030.0,405.6 L1031.0,406.1 L1032.0,406.7 L1033.0,407.2" fill="none" stroke="#111" stroke-width="1.9" stroke-linecap="round"/>
<path d="M1015.0,420.0 L1016.0,420.6 L1017.0,421.1 L1018.0,421.4 L1019.0,421.5 L1020.0,421.4 L1021.0,421.1 L1022.0,420.6 L1023.0,420.0 L1024.0,419.4 L1025.0,418.9 L1026.0,418.6 L1027.0,418.5 L1028.0,418.6 L1029.0,418.9 L1030.0,419.4 L1031.0,420.0 L1032.0,420.6 L1033.0,421.1 L1034.0,421.4 L1035.0,421.5 L1036.0,421.4" fill="none" stroke="#111" stroke-width="1.9" stroke-linecap="round"/>
<path d="M948,398 L948,412 M945,415 L945,420 M948,424 L948,436 M1053,386 L1053,402 M1052,410 L1052,418 M1050,392 L1050,398 M1052,298 L1052,312 M1050,317 L1050,326" stroke="#111" stroke-width="1.6" stroke-linecap="round"/>
<path d="M982.6,254 L1030,251.5 L1030,258.4 C1024,262 1018,270 1016.5,282 C1015.5,296 1015.5,315 1018.6,332 L1000.2,313.6 L990.2,332.7 C986,320 983,305 982.6,290 Z" fill="#f8948c" stroke="#111" stroke-width="1.2"/>
<path d="M1030,258.4 C1024,262 1018,270 1016.5,282 C1015.5,296 1015.5,315 1018.6,332 M982.6,292 C983,305 986,320 990.2,332.7 L1000.2,313.6 L1018.6,332" fill="none" stroke="#111" stroke-width="2.2"/>
<path d="M988.5,268 L989.5,282 M991.5,277 L991,289 M990,290 L990.5,300" stroke="#111" stroke-width="1.6" stroke-linecap="round"/>
<ellipse cx="968.5" cy="266" rx="7.5" ry="9" fill="#fff" stroke="#111" stroke-width="2.2"/>
<path d="M1036,266 C1036,258 1042,256 1047,258 C1052,260 1055,266 1053,272 C1049,276 1040,276 1036,266 Z" fill="#fff" stroke="#111" stroke-width="2.2"/>
<path d="M795,368 L827,368 L818,392 L789,449 L767,441 Z" fill="#a6ddd8" stroke="#111" stroke-width="2.2" stroke-linejoin="round"/>
<path d="M818,381 L842,379 L838,458 L817,458 Z" fill="#a6ddd8" stroke="#111" stroke-width="2.2" stroke-linejoin="round"/>
<path d="M805,404 C798,405 795,414 800,421 Z M838,407 C831,408 829,420 836,424 Z" fill="#fff" stroke="#111" stroke-width="1.9"/>
<path d="M767,442 L789,449 L796,467 L770,459 C766,455 765,448 767,442 Z" fill="#fbd28a" stroke="#111" stroke-width="2.2" stroke-linejoin="round"/>
<path d="M817,457 L838,457 L852,462 L849,466 L818,466 Z" fill="#fbd28a" stroke="#111" stroke-width="2.2" stroke-linejoin="round"/>
<path d="M804,331 L842,331 L841,370 L795,369 Z" fill="#f9b5b0" stroke="#111" stroke-width="2.2" stroke-linejoin="round"/>
<path d="M803,332 L841,332 L841,339.6 L802,339.6 Z M800,348.4 L841,348.4 L841,358.6 L798,358.6 Z" fill="#fbd28a"/>
<path d="M802,339.6 H841 M800,348.4 H841 M798,358.6 H841" stroke="#111" stroke-width="1.8"/>
<path d="M826,298 L842,296 L843,331 L838,318 Z" fill="#fff" stroke="#111" stroke-width="2.2" stroke-linejoin="round"/>
<path d="M803.1,309 C808,306.5 816,307.5 823.6,311.9 L818.5,333.8 C812,333.5 807,332.5 804.6,330.9 C800.5,327 800,322 800.9,319.2 C801,314 801.5,311 803.1,309 Z" fill="#f9b5b0" stroke="#111" stroke-width="2.2" stroke-linejoin="round"/>
<path d="M823,312 L835,315 L836,318.5 L822,318.5 Z" fill="#fbd28a"/>
<path d="M820.6,317.7 C830,318 840,318 845.5,317.7 C852,317 858,316.5 863,315.5 C870,314 875,312.5 879,311.2 C884,309 888,307.5 890.7,306 C892.5,304 893.5,301 895,298.8 C896.5,300 897.5,301.5 898.7,302.4 C901,301.5 903,300.5 905.3,300.2 C909,300 912,301 912.6,302.4 C914,304.5 914.5,307 914,309 C913.5,311 912.5,312.5 911.1,313.3 C908,315 905,315.8 902.4,316.3 C895,319 890,321.5 884.8,323.6 C878,326 872,327.5 865.9,328.7 C860,330 854,331.5 848.4,332.3 C843,333 837,334 832.3,334.5 C827,334.5 823,334 819.2,333.8 Z" fill="#fff" stroke="#111" stroke-width="2.2" stroke-linejoin="round"/>
<path d="M846,330.5 L850,329.8 M854,328 L858,327.2 M850,325.2 L853.5,324.6" stroke="#111" stroke-width="1.3" stroke-linecap="round"/>
<ellipse cx="891.5" cy="347.5" rx="26.5" ry="4.9" transform="rotate(-57 891.5 347.5)" fill="#fff" stroke="#111" stroke-width="2.2"/>
<path d="M900,325 L911.5,333 L916.5,325.5 L905.5,317.5 Z" fill="#fff" stroke="#111" stroke-width="1.9" stroke-linejoin="round"/>
<path d="M903,321.5 L913.5,329" stroke="#111" stroke-width="1.3"/>
<path d="M909,317.5 C911,311 913,305 916,301 C919,298.5 923,298 925.5,299.5 C927.5,303 926,310 922,316 C919,320 916,322 913,321 Z" fill="#fbd28a" stroke="#111" stroke-width="1.9" stroke-linejoin="round"/>
<ellipse cx="922.8" cy="331.6" rx="2.5" ry="3.4" fill="#fff" stroke="#111" stroke-width="1.7"/><ellipse cx="915.2" cy="344.3" rx="3.6" ry="3.2" fill="#fff" stroke="#111" stroke-width="1.7"/><ellipse cx="925.7" cy="356.4" rx="3" ry="3.3" fill="#fff" stroke="#111" stroke-width="1.7"/>
<path d="M849.4,251 C856,258 860,268 860,277 C860,288 853,296 843,298.5 C836,300.5 830,301 827,301.6 L832.5,311 L813.2,307 C812.5,301 811.5,297 810,295 C805,295 800.5,294 798.5,292 C796,289 797,286 801,284.5 L806.7,286.5 L806,270 Z" fill="#fff" stroke="#111" stroke-width="2.2" stroke-linejoin="round"/>
<path d="M806.7,286.5 C805,284 802,282 798.1,281.9 C794,281 791,277 790.9,273.3 C790.9,270.5 793,269.5 794.2,268.7 C795.5,266 795.5,261 795.5,257.6 C796.5,254 800,252.5 806,251 C809,250.5 811.5,250 811.9,249 C812.5,246 813,244.5 814.6,243.8 C817,241.5 819,241 823,241.8 C827,242 830,241 833.6,239.2 C836,237.5 837,235.5 840,235 C843,233.5 846,233.5 848,234.5 C852,236 853.5,239.5 853.3,243.1 C852.5,246 851,247 850.7,247.7 C848,250 846,250.5 845.4,251 C840,253 838,254 836.2,254.9 C830,256.5 827,257.5 824.4,258.2 C819,259.5 818,260.5 815.2,261.5 C812,263.5 810,265.5 808.7,267.4 C806,271 805.5,273 805.4,274 C804.5,277 804.5,279 804.7,280.6 C805,283 806,285 806.7,286.5 Z" fill="#fff" stroke="#111" stroke-width="2.2" stroke-linejoin="round"/>
<path d="M801,272 C800,265 802,260 806,257 C809,255 812,254 814,253 C817,250 820,248.5 823,248 C827,247.5 831,246.5 834,245 C838,243 841,242 844,241.5 C847,241 849.5,240.5 851,240.5" fill="none" stroke="#111" stroke-width="1.7" stroke-linecap="round"/>
<path d="M816.5,269.5 L821.8,275.5 M836.5,260.5 L842,261.5 M839,265.5 L840.8,269" stroke="#111" stroke-width="3.6" stroke-linecap="round"/>
<path d="M835,275.3 L840.2,276.6 L836.9,279.6" fill="none" stroke="#111" stroke-width="1.4" stroke-linejoin="round"/>
<path d="M830,287 C832,283 842,282 845.5,284 C847,288 842,292.5 836,292.5 C832,292.5 829,290 830,287 Z" fill="#fff" stroke="#111" stroke-width="2.1"/>
<circle cx="817.8" cy="287.8" r="3.9" fill="#fbd28a"/><circle cx="852.7" cy="277.7" r="4.2" fill="#fbd28a"/></g><g>
<!-- main selection -->
<rect x="756.7" y="161.4" width="314" height="314.6" fill="none" stroke="#9a9a9a" stroke-width="0.9" stroke-dasharray="1.5,1.5"/>
<path d="M913.4,134V161" stroke="#9a9a9a" stroke-width="1"/>
<g fill="#fff" stroke="#8f8f8f" stroke-width="1.4">
<circle cx="756.7" cy="161.4" r="4.6"/><circle cx="913.4" cy="161.4" r="4.6"/><circle cx="1070.6" cy="161.4" r="4.6"/>
<circle cx="756.7" cy="318.1" r="4.6"/><circle cx="1070.6" cy="318.1" r="4.6"/>
<circle cx="756.7" cy="476" r="4.6"/><circle cx="913.2" cy="476" r="4.6"/><circle cx="1070.6" cy="476" r="4.6"/>
</g>
<!-- inner selection -->
<rect x="982.6" y="250.4" width="46.7" height="80.8" fill="none" stroke="#9a9a9a" stroke-width="0.9" stroke-dasharray="1.5,1.5"/>
<path d="M1006.3,223V246" stroke="#9a9a9a" stroke-width="1.2"/>
<g fill="#fff" stroke="#8f8f8f" stroke-width="1.4">
<circle cx="982.6" cy="250.4" r="4.2"/><circle cx="1006.3" cy="250.4" r="4.2"/><circle cx="1029.3" cy="250.4" r="4.2"/>
<circle cx="982.6" cy="291" r="4.2"/><circle cx="1029.3" cy="291" r="4.2"/>
<circle cx="982.6" cy="331.2" r="4.2"/><circle cx="1006.3" cy="331.2" r="4.2"/><circle cx="1029.3" cy="331.2" r="4.2"/>
</g>
<!-- rotation handles -->
<defs><clipPath id="rclip"><rect x="0" y="121" width="1354" height="600"/></clipPath></defs>
<g clip-path="url(#rclip)"><path d="M918.01,122.99 A6.8,6.8 0 1 0 919.09,131.20" fill="none" stroke="#8f8f8f" stroke-width="3.8"/><path d="M918.01,122.99 A6.8,6.8 0 1 0 919.09,131.20" fill="none" stroke="#fff" stroke-width="1.4"/><path d="M914.70,125.30 L929.20,124.50 L921.80,132.50 Z" fill="#fff" stroke="#8f8f8f" stroke-width="1.2" stroke-linejoin="round"/></g>
<g><path d="M1010.61,210.79 A6.8,6.8 0 1 0 1011.69,219.00" fill="none" stroke="#8f8f8f" stroke-width="3.8"/><path d="M1010.61,210.79 A6.8,6.8 0 1 0 1011.69,219.00" fill="none" stroke="#fff" stroke-width="1.4"/><path d="M1007.30,213.10 L1021.80,212.30 L1014.40,220.30 Z" fill="#fff" stroke="#8f8f8f" stroke-width="1.2" stroke-linejoin="round"/></g>
<!-- scrollbar arrows -->
<path d="M194.5,134H200.5L197.5,130.5Z M194.5,656H200.5L197.5,659.5Z" fill="#666"/>
<path d="M1347.5,134H1353.5L1350.5,130.5Z M1347.5,568H1353.5L1350.5,571.5Z" fill="#666"/>
<path d="M1348,587H1354L1351,583Z M1348,591H1354L1351,587Z M1348,601H1354L1351,605Z M1348,605H1354L1351,609Z" fill="#666"/>
<!-- status icons -->
<g fill="none" stroke="#555" stroke-width="1">
<path d="M84.5,671.5H90.5L91.5,673V683.5H84.5Z M91.5,673L92.5,671.5H97.5V675 M97.5,679V683.5H91.5 M91.5,673V684.5 M89.5,682.5L91.5,684.5L93.5,682.5"/>
<path d="M92.5,677L94.5,679L98,674.5" stroke-width="1.3"/>
<path d="M952,677.5H963 M952,680.5H963 M954,683.5H961 M955,675L957.5,672.5L960,675"/>
<path d="M1029.5,671.5H1042.5V683.5H1029.5Z M1032.5,671.5V683.5 M1032.5,680.5H1042.5 M1034.5,673.5H1040.5V678H1034.5Z" stroke="#666"/>
<path d="M1067.5,671.5H1072.5V676.5H1067.5Z M1075.5,671.5H1080.5V676.5H1075.5Z M1067.5,679.5H1072.5V684.5H1067.5Z M1075.5,679.5H1080.5V684.5H1075.5Z" stroke="#666"/>
<path d="M1105,672.5C1107,671.5 1109,671.5 1111.5,673C1114,671.5 1116,671.5 1118,672.5V683C1116,682 1114,682 1111.5,683.5C1109,682 1107,682 1105,683Z M1111.5,673V684 M1107,675.5H1110 M1107,678H1110 M1113,675.5H1116 M1113,678H1116" stroke="#666"/>
<path d="M1142.5,672H1156 M1143.5,672V678.5H1155V672 M1149.5,678.5V683.5 M1146.5,683.5H1152.5" stroke="#666"/>
<path d="M1341.5,671.5H1354 M1341.5,671.5V685 M1347.5,673V676 M1346,674.5L1347.5,673L1349,674.5 M1343,678.5H1346 M1344.5,677L1343,678.5L1344.5,680 M1347.5,681V684 M1346,682.5L1347.5,684L1349,682.5" stroke="#666"/>
</g>
<rect x="1174.3" y="677.5" width="5" height="1.6" fill="#444"/>
<path d="M1184.5,678.5H1283" stroke="#999" stroke-width="1"/>
<path d="M1234.5,676V681" stroke="#999" stroke-width="1"/>
<rect x="1227" y="672" width="5" height="10.6" fill="#666"/>
<path d="M1287.5,678.3H1294.8 M1291.15,674.6V682" stroke="#444" stroke-width="1.6"/>
</g>

</svg>
<span class=t style="left:11.50px;top:3.95px;font-size:13px;line-height:13px;color:#444;transform:scaleX(0.8686);">File</span><span class=t style="left:62.50px;top:3.95px;font-size:13px;line-height:13px;color:#262626;font-weight:normal;transform:scaleX(1.0465);">Home</span><span class=t style="left:126.60px;top:3.95px;font-size:13px;line-height:13px;color:#444;transform:scaleX(0.9964);">Insert</span><span class=t style="left:188.30px;top:3.95px;font-size:13px;line-height:13px;color:#444;transform:scaleX(0.9711);">Design</span><span class=t style="left:257.40px;top:3.95px;font-size:13px;line-height:13px;color:#444;transform:scaleX(0.9697);">Transitions</span><span class=t style="left:350.00px;top:3.95px;font-size:13px;line-height:13px;color:#444;transform:scaleX(0.9905);">Animations</span><span class=t style="left:445.30px;top:3.95px;font-size:13px;line-height:13px;color:#444;transform:scaleX(0.9639);">Slide Show</span><span class=t style="left:537.00px;top:3.95px;font-size:13px;line-height:13px;color:#444;transform:scaleX(0.9384);">Review</span><span class=t style="left:605.00px;top:3.95px;font-size:13px;line-height:13px;color:#444;transform:scaleX(0.9659);">View</span><span class=t style="left:660.00px;top:3.95px;font-size:13px;line-height:13px;color:#444;transform:scaleX(0.9907);">Help</span><span class=t style="left:729.00px;top:3.95px;font-size:13px;line-height:13px;color:#c43e1c;transform:scaleX(0.9910);">Format</span><span class=t style="left:840.00px;top:3.95px;font-size:13px;line-height:13px;color:#444;transform:scaleX(0.9344);">Search</span><span class=t style="left:1195.80px;top:3.95px;font-size:13px;line-height:13px;color:#c43e1c;transform:scaleX(0.9855);">Share</span><span class=t style="left:1272.50px;top:3.95px;font-size:13px;line-height:13px;color:#c43e1c;transform:scaleX(1.0372);">Comments</span><span class=t style="left:9.50px;top:67.47px;font-size:12.5px;line-height:12.5px;color:#444;transform:scaleX(0.8633);">Paste</span><span class=t style="left:6.80px;top:108.25px;font-size:11px;line-height:11px;color:#444;transform:scaleX(1.0575);">Clipboard</span><span class=t style="left:104.70px;top:66.97px;font-size:12.5px;line-height:12.5px;color:#444;transform:scaleX(0.9314);">New</span><span class=t style="left:99.30px;top:82.78px;font-size:12.5px;line-height:12.5px;color:#444;transform:scaleX(0.8634);">Slide</span><span class=t style="left:142.70px;top:66.97px;font-size:12.5px;line-height:12.5px;color:#444;transform:scaleX(0.8467);">Reuse</span><span class=t style="left:143.00px;top:82.78px;font-size:12.5px;line-height:12.5px;color:#444;transform:scaleX(0.8694);">Slides</span><span class=t style="left:201.00px;top:34.58px;font-size:12.5px;line-height:12.5px;color:#444;transform:scaleX(0.8926);">Layout</span><span class=t style="left:201.00px;top:57.88px;font-size:12.5px;line-height:12.5px;color:#444;transform:scaleX(0.8513);">Reset</span><span class=t style="left:201.00px;top:82.28px;font-size:12.5px;line-height:12.5px;color:#444;transform:scaleX(0.9112);">Section</span><span class=t style="left:159.50px;top:108.25px;font-size:11px;line-height:11px;color:#444;transform:scaleX(0.9710);">Slides</span><span class=t style="left:274.50px;top:42.70px;font-size:12px;line-height:12px;color:#444;transform:scaleX(0.9369);">Arial</span><span class=t style="left:406.40px;top:42.70px;font-size:12px;line-height:12px;color:#444;transform:scaleX(0.8608);">14</span><span class=t style="left:377.50px;top:108.25px;font-size:11px;line-height:11px;color:#444;transform:scaleX(1.0493);">Font</span><span class=t style="left:597.50px;top:108.25px;font-size:11px;line-height:11px;color:#444;transform:scaleX(1.0102);">Paragraph</span><span class=t style="left:883.00px;top:67.17px;font-size:12.5px;line-height:12.5px;color:#444;transform:scaleX(0.9352);">Arrange</span><span class=t style="left:934.30px;top:67.17px;font-size:12.5px;line-height:12.5px;color:#444;transform:scaleX(0.9670);">Quick</span><span class=t style="left:930.20px;top:82.78px;font-size:12.5px;line-height:12.5px;color:#444;transform:scaleX(0.8811);">Styles</span><span class=t style="left:993.30px;top:33.08px;font-size:12.5px;line-height:12.5px;color:#444;transform:scaleX(0.9084);">Shape Fill</span><span class=t style="left:993.30px;top:56.38px;font-size:12.5px;line-height:12.5px;color:#444;transform:scaleX(0.9150);">Shape Outline</span><span class=t style="left:993.30px;top:79.67px;font-size:12.5px;line-height:12.5px;color:#444;transform:scaleX(0.8826);">Shape Effects</span><span class=t style="left:879.50px;top:108.25px;font-size:11px;line-height:11px;color:#444;transform:scaleX(1.0630);">Drawing</span><span class=t style="left:1118.30px;top:33.67px;font-size:12.5px;line-height:12.5px;color:#444;transform:scaleX(0.9084);">Find</span><span class=t style="left:1118.30px;top:56.88px;font-size:12.5px;line-height:12.5px;color:#444;transform:scaleX(0.8937);">Replace</span><span class=t style="left:1118.30px;top:80.17px;font-size:12.5px;line-height:12.5px;color:#444;transform:scaleX(0.9065);">Select</span><span class=t style="left:1118.30px;top:108.25px;font-size:11px;line-height:11px;color:#444;transform:scaleX(1.0850);">Editing</span><span class=t style="left:1197.60px;top:67.88px;font-size:12.5px;line-height:12.5px;color:#444;transform:scaleX(0.9356);">Dictate</span><span class=t style="left:1202.00px;top:108.25px;font-size:11px;line-height:11px;color:#444;transform:scaleX(1.0029);">Voice</span><span class=t style="left:5.60px;top:137.72px;font-size:15.5px;line-height:15.5px;color:#444;transform:scaleX(0.8580);">3</span><span class=t style="left:5.60px;top:237.72px;font-size:15.5px;line-height:15.5px;color:#e8643c;transform:scaleX(0.8580);">4</span><span class=t style="left:5.60px;top:337.72px;font-size:15.5px;line-height:15.5px;color:#444;transform:scaleX(0.8580);">5</span><span class=t style="left:5.60px;top:437.72px;font-size:15.5px;line-height:15.5px;color:#444;transform:scaleX(0.8580);">6</span><span class=t style="left:5.60px;top:537.73px;font-size:15.5px;line-height:15.5px;color:#444;transform:scaleX(0.8580);">7</span><span class=t style="left:5.60px;top:637.73px;font-size:15.5px;line-height:15.5px;color:#444;transform:scaleX(0.8580);">8</span><span class=t style="left:222.00px;top:641.73px;font-size:15.5px;line-height:15.5px;color:#666;transform:scaleX(0.9414);">Click to add notes</span><span class=t style="left:2.40px;top:671.30px;font-size:12px;line-height:12px;color:#444;transform:scaleX(0.9203);">Slide 4 of 41</span><span class=t style="left:115.30px;top:671.30px;font-size:12px;line-height:12px;color:#444;transform:scaleX(0.9378);">English (United States)</span><span class=t style="left:250.50px;top:671.30px;font-size:12px;line-height:12px;color:#444;transform:scaleX(0.8961);">Recovered</span><span class=t style="left:968.00px;top:671.60px;font-size:12px;line-height:12px;color:#444;transform:scaleX(0.9343);">Notes</span><span class=t style="left:1306.00px;top:671.60px;font-size:12px;line-height:12px;color:#444;transform:scaleX(0.8614);">90%</span><span class=t style="left:445.40px;top:337.10px;font-size:14px;line-height:14px;color:#1a1a1a;transform:scaleX(1.1054);">Venus has a beautiful name and is</span><span class=t style="left:445.40px;top:352.95px;font-size:14px;line-height:14px;color:#1a1a1a;transform:scaleX(1.0936);">the second planet from the Sun. It’s</span><span class=t style="left:445.40px;top:368.80px;font-size:14px;line-height:14px;color:#1a1a1a;transform:scaleX(1.1166);">terribly hot—even hotter than</span><span class=t style="left:445.40px;top:384.65px;font-size:14px;line-height:14px;color:#1a1a1a;transform:scaleX(1.0959);">Mercury—and its atmosphere is</span><span class=t style="left:445.40px;top:400.50px;font-size:14px;line-height:14px;color:#1a1a1a;transform:scaleX(1.0854);">extremely poisonous. It’s the second-</span><span class=t style="left:445.40px;top:416.35px;font-size:14px;line-height:14px;color:#1a1a1a;transform:scaleX(1.1475);">brightest natural object in the night</span><span class=t style="left:445.40px;top:432.20px;font-size:14px;line-height:14px;color:#1a1a1a;transform:scaleX(1.1044);">sky after the Moon</span>
</body></html>
